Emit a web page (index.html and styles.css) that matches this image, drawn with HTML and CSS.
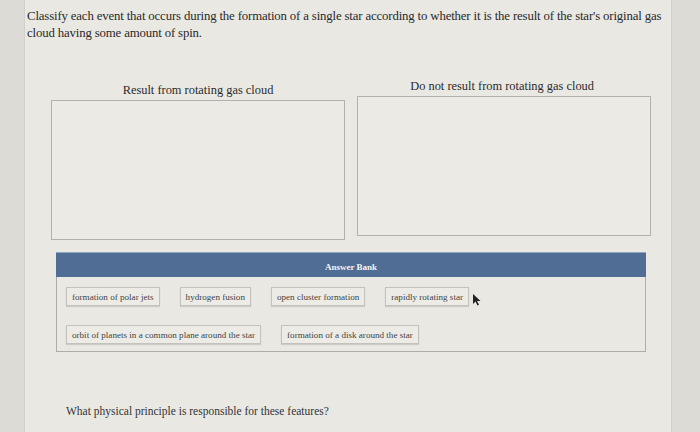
FILE: index.html
```html
<!DOCTYPE html>
<html>
<head>
<meta charset="utf-8">
<link rel="stylesheet" href="styles.css">
</head>
<body>
<div class="page">
  <p class="prompt">Classify each event that occurs during the formation of a single star according to whether it is the result of the star's original gas cloud having some amount of spin.</p>
  <div class="columns">
    <div class="column">
      <div class="col-title">Result from rotating gas cloud</div>
      <div class="drop"></div>
    </div>
    <div class="column col-right">
      <div class="col-title">Do not result from rotating gas cloud</div>
      <div class="drop"></div>
    </div>
  </div>
  <div class="bank">
    <div class="bank-head">Answer Bank</div>
    <div class="bank-body">
      <div class="row">
        <span class="chip">formation of polar jets</span>
        <span class="chip">hydrogen fusion</span>
        <span class="chip">open cluster formation</span>
        <span class="chip chip-last">rapidly rotating star<svg class="cursor" width="9" height="12" viewBox="0 0 9 12"><path d="M1 0 L1 10 L3.5 7.5 L5.5 11.5 L7 10.8 L5 7 L8.5 7 Z" fill="#222"/></svg></span>
      </div>
      <div class="row row2">
        <span class="chip">orbit of planets in a common plane around the star</span>
        <span class="chip">formation of a disk around the star</span>
      </div>
    </div>
  </div>
  <p class="question">What physical principle is responsible for these features?</p>
</div>
</body>
</html>
```

FILE: styles.css
```css
html, body {
  margin: 0;
  padding: 0;
}
body {
  width: 700px;
  height: 432px;
  overflow: hidden;
  background: #dcdbd6;
  font-family: "Liberation Serif", "Times New Roman", serif;
  color: #2b2b2b;
}
.page {
  margin-left: 24px;
  width: 648px;
  height: 432px;
  background: #e9e8e3;
  box-sizing: border-box;
  padding: 8px 0 0 2px;
  border-left: 1px solid #d2d1cc;
  border-right: 1px solid #d2d1cc;
}
.prompt {
  margin: 0;
  font-size: 12.8px;
  line-height: 17px;
  width: 644px;
  letter-spacing: -0.15px;
  color: #2a2a2a;
}
.columns {
  display: flex;
  gap: 12px;
  margin: 40px 0 0 24px;
}
.column {
  width: 294px;
}
.col-right {
  margin-top: -4px;
}
.col-title {
  text-align: center;
  font-size: 12.4px;
  line-height: 16px;
  margin-bottom: 2px;
}
.col-right .col-title {
  text-align: right;
  padding-right: 57px;
}
.drop {
  height: 138px;
  border: 1px solid #b2b1ac;
  background: #ebeae5;
}
.bank {
  margin: 12px 0 0 29px;
  width: 590px;
}
.bank-head {
  background: #506d96;
  color: #f4f4f4;
  font-weight: bold;
  font-size: 9px;
  height: 24px;
  line-height: 28px;
  text-align: center;
  border-top: 1px solid #8fa4c0;
}
.bank-body {
  border: 1px solid #aeada8;
  border-top: none;
  height: 75px;
  box-sizing: border-box;
  padding: 10px 0 0 9px;
}
.row {
  display: flex;
  gap: 20px;
  align-items: center;
}
.row2 {
  margin-top: 19px;
}
.chip {
  display: inline-flex;
  align-items: center;
  height: 19px;
  box-sizing: border-box;
  padding: 0 5px;
  font-size: 9.1px;
  color: #444;
  background: #ecebe6;
  border: 1px solid #c3c2bd;
  box-shadow: 0 1px 1px rgba(0,0,0,0.12);
  white-space: nowrap;
}
.chip-last {
  position: relative;
}
.cursor {
  position: absolute;
  left: calc(100% + 4px);
  top: 6px;
}
.question {
  margin: 53px 0 0 39px;
  font-size: 11.5px;
  color: #333;
}
```
